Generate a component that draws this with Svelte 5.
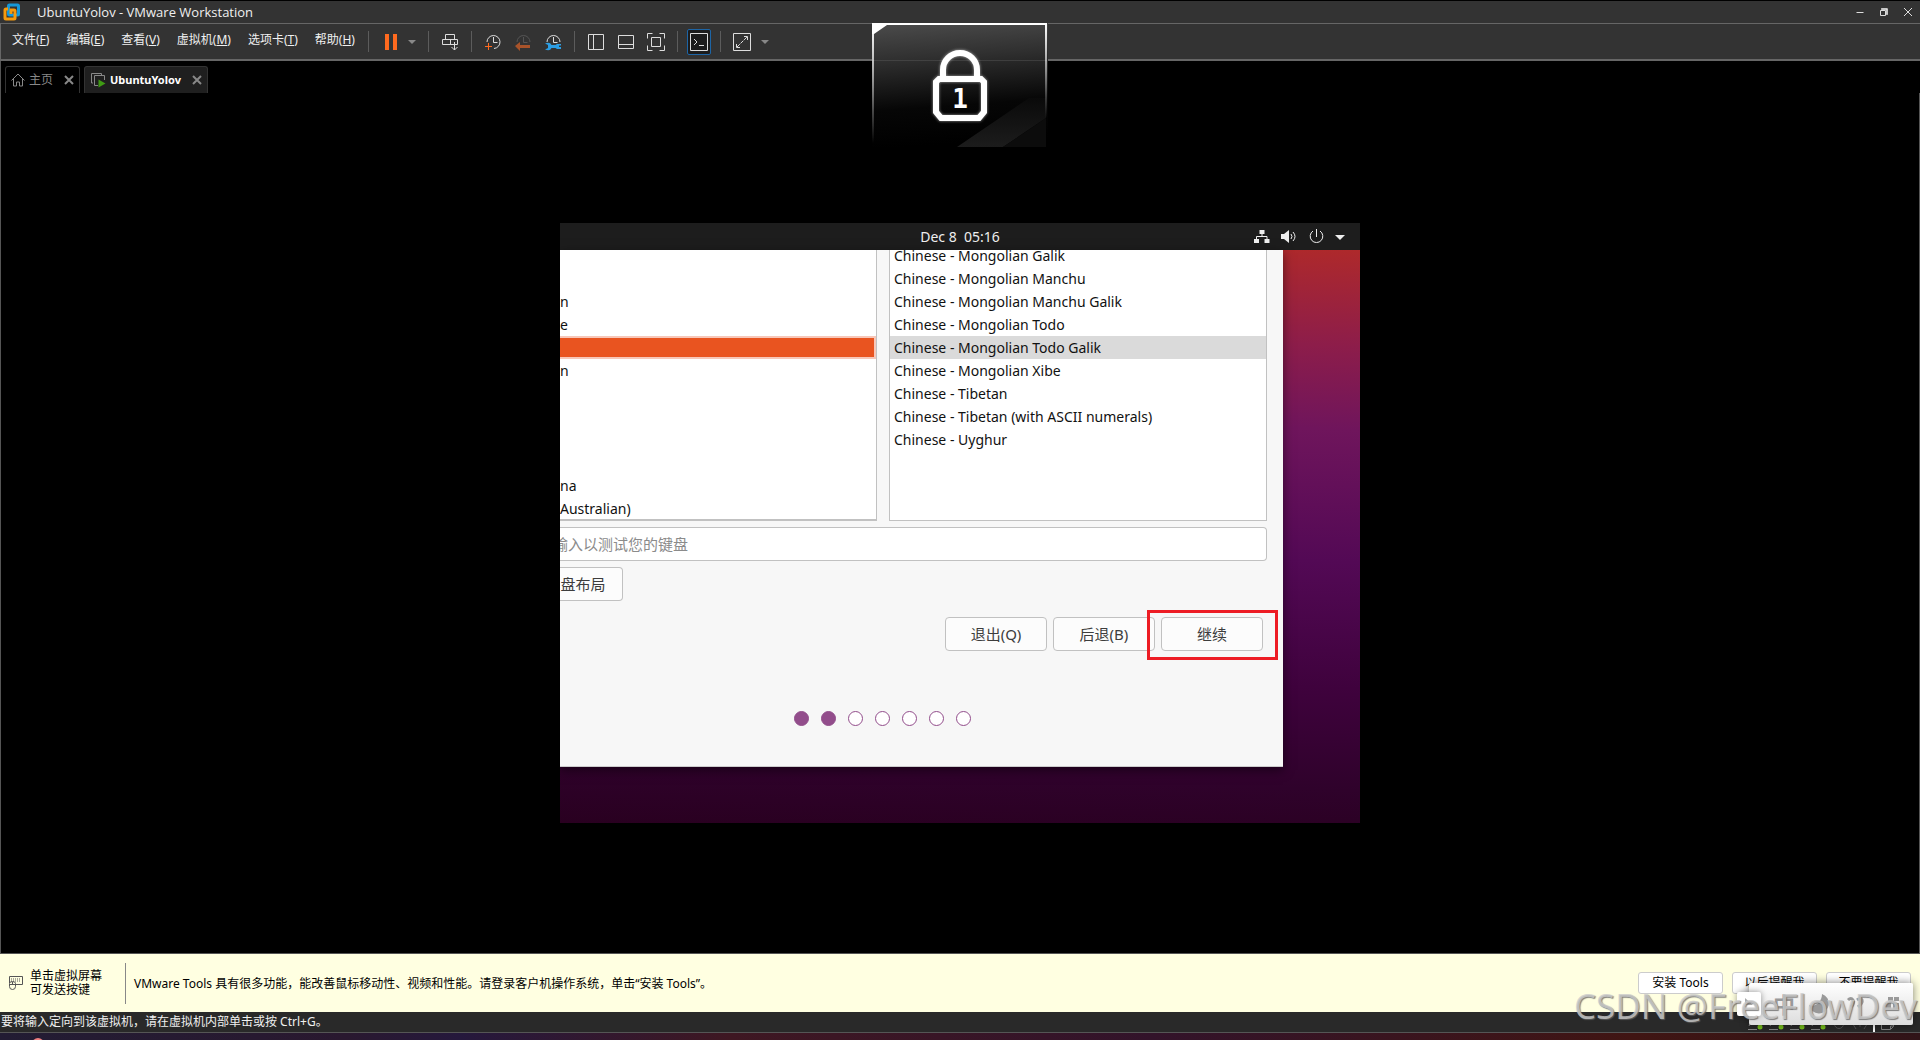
<script>
	const menus = [
		['文件', 'F'],
		['编辑', 'E'],
		['查看', 'V'],
		['虚拟机', 'M'],
		['选项卡', 'T'],
		['帮助', 'H']
	];

	const layouts = ['', '', 'n', 'e', '', 'n', '', '', '', '', 'na', 'Australian)'];

	const variants = [
		'Chinese - Mongolian Galik',
		'Chinese - Mongolian Manchu',
		'Chinese - Mongolian Manchu Galik',
		'Chinese - Mongolian Todo',
		'Chinese - Mongolian Todo Galik',
		'Chinese - Mongolian Xibe',
		'Chinese - Tibetan',
		'Chinese - Tibetan (with ASCII numerals)',
		'Chinese - Uyghur'
	];

	const steps = [true, true, false, false, false, false, false];

	let selected = $state(4);
</script>

{#snippet cross()}
	<svg width="10" height="10" viewBox="0 0 10 10"><path d="M1 1l8 8M9 1l-8 8" /></svg>
{/snippet}

<div class="workstation">
	<header class="titlebar">
		<svg class="logo" width="18" height="18" viewBox="0 0 18 18">
			<rect x="5.5" y="2" width="10" height="10" rx="1" stroke="#1598d8" />
			<path d="M5 6H3q-1 0-1 1v8q0 1 1 1h8q1 0 1-1V8q0-1-1-1H8v4" stroke="#f59a0c" />
		</svg>
		<span class="title">UbuntuYolov - VMware Workstation</span>
		<div class="window-buttons">
			<button type="button" aria-label="最小化">
				<svg width="10" height="10" viewBox="0 0 10 10"><path d="M1.5 5.5h7" /></svg>
			</button>
			<button type="button" aria-label="还原">
				<svg width="10" height="10" viewBox="0 0 10 10"><path d="M1.5 3.5h5v5h-5zM3 2h5v5" /><path d="M2 2h6v6" stroke-width="1.5" /></svg>
			</button>
			<button type="button" aria-label="关闭">{@render cross()}</button>
		</div>
	</header>

	<div class="toolbar">
		<nav class="menus">
			{#each menus as [label, key]}
				<button type="button">{label}(<u>{key}</u>)</button>
			{/each}
		</nav>
		<div class="tools">
			<div class="group power">
				<button type="button" aria-label="挂起">
					<svg width="14" height="18" viewBox="0 0 14 18"><path d="M1 1h4v16H1zM9 1h4v16H9z" fill="#ff6a1f" stroke="none" /></svg>
				</button>
				<button type="button" aria-label="电源选项">
					<svg width="8" height="6" viewBox="0 0 8 6"><path d="M0 1h8L4 5z" fill="#888" stroke="none" /></svg>
				</button>
			</div>
			<div class="group">
				<button type="button" aria-label="发送 Ctrl+Alt+Del">
					<svg width="18" height="18" viewBox="0 0 18 18"><path d="M4.500 6.500v-5h9v5M1.500 6.500h15v5h-15zM9.500 6.500v5M13.500 9v8M10.500 14l3 3 3-3" /></svg>
				</button>
			</div>
			<div class="group">
				<button type="button" aria-label="拍摄快照">
					<svg width="18" height="18" viewBox="0 0 18 18">
						<path d="M3 9A6.500 6.500 0 1 1 10 15.500M9.500 4v5.500h4" />
						<path d="M4.500 10v7M1 13.500h7" stroke="#ff6a1f" />
					</svg>
				</button>
				<button type="button" aria-label="恢复快照">
					<svg width="18" height="18" viewBox="0 0 18 18">
						<path d="M3 9A6.500 6.500 0 1 1 16 9M9.500 4v5.500h4" stroke="#555" />
						<path d="M1 13l5-4v3h10v3H6v3z" fill="#a8532a" stroke="none" />
					</svg>
				</button>
				<button type="button" aria-label="管理快照">
					<svg width="18" height="18" viewBox="0 0 18 18">
						<path d="M3 9A6.500 6.500 0 1 1 16 9M9.500 4v5.500h4" />
						<path d="M1 10.500Q6 8.500 7.500 12h4l1.500-1h4v1.500h-2v1.500h2V16h-4l-1.500-1h-4Q6 18.500 1 16.500l3-1.500v-3z" fill="#2c9ee3" stroke="none" />
					</svg>
				</button>
			</div>
			<div class="group">
				<button type="button" aria-label="显示库">
					<svg width="18" height="18" viewBox="0 0 18 18"><path d="M1.500 1.500h15v15h-15zM6.500 1.500v15" /></svg>
				</button>
				<button type="button" aria-label="缩略图栏">
					<svg width="18" height="18" viewBox="0 0 18 18"><path d="M1.500 2.500h15v13h-15zM1.500 11.500h15" /></svg>
				</button>
				<button type="button" aria-label="全屏">
					<svg width="18" height="18" viewBox="0 0 18 18"><path d="M.5 5.500v-5h5M12.500.5h5v5M17.500 12.500v5h-5M5.500 17.500h-5v-5M4.500 4.500h9v9h-9z" /></svg>
				</button>
			</div>
			<div class="group">
				<button type="button" class="console" aria-label="控制台视图">
					<svg width="18" height="18" viewBox="0 0 18 18"><path d="M.5.5h17v17H.5zM4 6l3 3-3 3M9 12.500h5" /></svg>
				</button>
			</div>
			<div class="group stretch">
				<button type="button" aria-label="自由拉伸">
					<svg width="18" height="18" viewBox="0 0 18 18"><path d="M.5.5h17v17H.5zM11 3.500h3.500V7M3.500 11v3.500H7" /><path d="M4 14L14 4" stroke-dasharray="4 1" /></svg>
				</button>
				<button type="button" aria-label="拉伸选项">
					<svg width="8" height="6" viewBox="0 0 8 6"><path d="M0 1h8L4 5z" fill="#888" stroke="none" /></svg>
				</button>
			</div>
		</div>
	</div>

	<div class="tabs">
		<div class="tab">
			<svg width="14" height="14" viewBox="0 0 14 14"><path d="M.5 7.500L7 1l6.500 6.500M2.500 6v7h3V9h3v4h3V6" /></svg>
			<span>主页</span>
			<button type="button" aria-label="关闭主页">{@render cross()}</button>
		</div>
		<div class="tab active">
			<svg width="16" height="16" viewBox="0 0 16 16">
				<path d="M3 11H1.500V1.500h10V3M8 13.500H4.500v-10h10V8" />
				<path d="M8.500 7.500l7 4-7 4z" fill="#3f9b14" stroke="none" />
			</svg>
			<span>UbuntuYolov</span>
			<button type="button" aria-label="关闭 UbuntuYolov">{@render cross()}</button>
		</div>
	</div>

	<main class="console-view">
		<div class="guest">
			<div class="topbar">
				<span></span>
				<time>Dec 8&nbsp; 05:16</time>
				<div class="indicators">
					<svg width="16" height="16" viewBox="0 0 16 16"><path d="M5.500 1h5v4h-5zM0 10h5v4H0zM10.500 10h5v4h-5z" fill="#eee" stroke="none" /><path d="M8 5v2.500M2.500 10V7.500h10.500V10" /></svg>
					<svg width="16" height="16" viewBox="0 0 16 16"><path d="M0 5h3l5-4v13l-5-4H0z" fill="#eee" stroke="none" /><path d="M10 5q2 2.500 0 5M12 3q4 4.500 0 9" /></svg>
					<svg width="16" height="16" viewBox="0 0 16 16"><path d="M8.500 0v8M5 2a6.300 6.300 0 1 0 7 0" /></svg>
					<svg width="10" height="16" viewBox="0 0 10 16"><path d="M0 6h10L5 11z" fill="#eee" stroke="none" /></svg>
				</div>
			</div>

			<div class="desktop">
				<section class="installer">
					<div class="lists">
						<ul class="list clipped">
							{#each layouts as name, i}
								<li class:chosen={i === 4}>{name}</li>
							{/each}
						</ul>
						<ul class="list">
							{#each variants as name, i}
								<li class:current={i === selected}>
									<button type="button" onclick={() => (selected = i)}>{name}</button>
								</li>
							{/each}
						</ul>
					</div>
					<input class="test-field" type="text" placeholder="输入以测试您的键盘" aria-label="测试键盘" />
					<button type="button" class="push detect">盘布局</button>
					<div class="actions">
						<button type="button" class="push">退出(Q)</button>
						<button type="button" class="push">后退(B)</button>
						<div class="highlighted">
							<button type="button" class="push">继续</button>
						</div>
					</div>
					<div class="steps">
						{#each steps as done}
							<span class:done></span>
						{/each}
					</div>
				</section>
			</div>
		</div>
	</main>

	<aside class="hint-bar">
		<svg width="14" height="16" viewBox="0 0 14 16">
			<path d="M.5 1.500h13v8H7M.5 1.500V8" />
			<path d="M2 4h10M2 6h10" stroke-dasharray="1 1" />
			<path d="M.5 8.500q0-2 3-2t3 2v3q0 3-3 3t-3-3zM.5 9.500h6M3.500 7v3" />
		</svg>
		<p class="grab">单击虚拟屏幕<br />可发送按键</p>
		<p class="message">VMware Tools 具有很多功能，能改善鼠标移动性、视频和性能。请登录客户机操作系统，单击“安装 Tools”。</p>
		<div class="hint-actions">
			<button type="button">安装 Tools</button>
			<button type="button">以后提醒我</button>
			<button type="button">不要提醒我</button>
		</div>
	</aside>

	<footer class="statusbar">
		<span>要将输入定向到该虚拟机，请在虚拟机内部单击或按 Ctrl+G。</span>
		<div class="devices">
			{#each [0, 1, 2, 3] as device}
				<svg width="16" height="14" viewBox="0 0 16 14"><path d="M1 11.500h9M2 8l2-4h6" stroke="#888" /><circle cx="13" cy="9" r="2.500" fill="#7ac51c" stroke="none" /></svg>
			{/each}
			<svg width="16" height="14" viewBox="0 0 16 14"><circle cx="8" cy="6" r="4.500" stroke="#555" /></svg>
			<svg width="16" height="14" viewBox="0 0 16 14"><path d="M2 3q-2 4 2 8M14 3q2 4-2 8M8 5v4" stroke="#555" /></svg>
			<i></i>
			<svg width="16" height="14" viewBox="0 0 16 14"><path d="M1.500 2v9.500h9l3-3V2M10.500 11v-3h3" stroke="#888" /></svg>
		</div>
	</footer>
	<div class="taskbar"><i></i></div>
</div>

<div class="lock-osd">
	<svg width="176" height="125" viewBox="0 0 176 125">
		<defs>
			<linearGradient id="osd" x1="0" y1="0" x2="0.100" y2="1">
				<stop offset="0" stop-color="#4c4c4c" />
				<stop offset="0.300" stop-color="#303030" />
				<stop offset="0.700" stop-color="#060606" />
				<stop offset="1" stop-color="#000" />
			</linearGradient>
			<linearGradient id="edge" x1="0" y1="0" x2="0" y2="1">
				<stop offset="0" stop-color="#fff" />
				<stop offset="1" stop-color="#fff" stop-opacity="0" />
			</linearGradient>
			<linearGradient id="shine" x1="0" y1="0" x2="0" y2="1">
				<stop offset="0" stop-color="#0a0a0a" />
				<stop offset="1" stop-color="#1c1c1c" />
			</linearGradient>
			<filter id="glow" x="-20%" y="-20%" width="140%" height="140%"><feGaussianBlur stdDeviation="1.500" /></filter>
		</defs>
		<rect width="176" height="125" fill="url(#osd)" stroke="none" />
		<path d="M85 124l72-49h17v20l-43 29z" fill="url(#shine)" stroke="none" />
		<path d="M131 124l43-29v29z" fill="#0c0c0c" stroke="none" />
		<rect y="37" width="175" height="1" fill="#666" opacity="0.350" stroke="none" />
		<rect width="2" height="120" fill="url(#edge)" stroke="none" />
		<rect x="173" width="2" height="95" fill="url(#edge)" stroke="none" />
		<path d="M0 0h175v2H15L2 11H0z" fill="#fff" stroke="none" />
		<g class="padlock" filter="url(#glow)" opacity="0.600"><path d="M71 56V47a17 17 0 0 1 34 0v9M67 56h42l3 3v30l-5 6H69l-5-6V59z" /></g>
		<g class="padlock"><path d="M71 56V47a17 17 0 0 1 34 0v9M67 56h42l3 3v30l-5 6H69l-5-6V59z" /></g>
		<text x="88" y="85" text-anchor="middle">1</text>
	</svg>
</div>

<div class="ime">
	<span class="ime-handle"><svg width="24" height="24" viewBox="0 0 24 24"><path d="M8 6l8 7H8z" fill="#aaa" stroke="none" /></svg></span>
	<div class="ime-bar">
		<span>中</span>
		<svg width="24" height="24" viewBox="0 0 24 24"><path d="M15 2a10 10 0 1 1-13 11c6 3 13-3 13-11z" fill="#999" stroke="none" /></svg>
		<svg width="24" height="24" viewBox="0 0 24 24"><path d="M5 8q3-3 5 0t-2 7M14 8q4-3 5 0t-4 7" stroke="#999" stroke-width="3" /></svg>
		<svg width="24" height="24" viewBox="0 0 24 24"><path d="M9 5h5v4H9zM15 5h5v4h-5zM6 11h6v6H6zM14 11h6v6h-6z" fill="#999" stroke="none" /></svg>
	</div>
</div>
<div class="watermark">CSDN @FreeFlowDev</div>

<style>
	:global(body) {
		background: #000;
		color: #f0f0f0;
		font-family: 'Noto Sans', 'Noto Sans CJK SC', sans-serif;
		font-size: 12px;
		line-height: 16px;
	}

	button {
		display: flex;
		align-items: center;
		justify-content: center;
		padding: 0;
		border: 0;
		background: none;
		color: inherit;
		font: inherit;
		white-space: nowrap;
	}

	svg {
		display: block;
		flex: none;
		fill: none;
		stroke: #ddd;
	}

	p,
	ul {
		margin: 0;
		padding: 0;
	}

	.workstation {
		display: flex;
		flex-direction: column;
		min-height: 100vh;
	}

	.titlebar {
		display: flex;
		align-items: center;
		height: 23px;
		padding-left: 3px;
		border-top: 1px solid #000;
		box-sizing: border-box;
		background: #333;
	}

	.logo {
		stroke-width: 3;
	}

	.title {
		flex: 1;
		margin-left: 16px;
		font-family: 'Open Sans', sans-serif;
		font-size: 13px;
	}

	.window-buttons {
		display: flex;
		gap: 14px;
		padding-right: 7px;
	}

	.toolbar {
		display: flex;
		height: 38px;
		box-sizing: border-box;
		border-top: 1px solid #666;
		border-bottom: 2px solid #666;
		border-left: 1px solid #666;
		background: #333;
	}

	.menus {
		display: flex;
		align-items: center;
		gap: 17px;
		padding: 0 13px 4px 11px;
	}

	.tools,
	.group {
		display: flex;
		align-items: center;
	}

	.group {
		gap: 12px;
		height: 21px;
		padding: 0 12px;
		border-left: 1px solid #5c5c5c;
	}

	.power,
	.stretch {
		gap: 10px;
	}

	.power {
		padding-left: 15px;
	}

	.console {
		width: 24px;
		height: 26px;
		box-sizing: border-box;
		margin: 0 -3px;
		border: 1px solid #1d65a6;
		border-radius: 2px;
		background: #1c1c1c;
	}

	.tabs {
		display: flex;
		gap: 4px;
		padding: 5px 4px 0;
		border-left: 1px solid #555;
	}

	.tab {
		display: flex;
		align-items: center;
		gap: 4px;
		height: 27px;
		padding: 0 5px;
		box-sizing: border-box;
		border: 1px solid #333;
		border-bottom: 0;
		border-radius: 3px 3px 0 0;
		color: #888;
	}

	.tab svg {
		stroke: #888;
	}

	.tab button {
		margin-left: 7px;
	}

	.tab button svg {
		stroke-width: 2;
	}

	.tab.active {
		background: #1f1f1f;
		color: #fff;
		font-size: 11px;
		font-weight: 700;
	}

	.console-view {
		display: flex;
		flex: 1;
		align-items: center;
		justify-content: center;
		border: 1px solid #555;
		border-top: 0;
	}

	.guest {
		width: 800px;
		overflow: hidden;
	}

	.topbar {
		display: grid;
		grid-template-columns: 1fr auto 1fr;
		align-items: center;
		height: 27px;
		background: #1d1d1d;
		color: #eee;
		font-size: 14px;
	}

	.indicators {
		display: flex;
		gap: 11px;
		justify-content: flex-end;
		padding-right: 15px;
	}

	.indicators svg {
		stroke: #eee;
	}

	.desktop {
		height: 573px;
		background: linear-gradient(182deg, #ae292b 0%, #8d1d4a 16%, #6f155c 30%, #530955 52%, #3f023d 73%, #2f022b 90%, #290020 100%);
	}

	.installer {
		width: 723px;
		height: 517px;
		box-sizing: border-box;
		border-bottom: 1px solid #ccc;
		background: #f7f7f7;
		box-shadow: 0 3px 10px rgba(0, 0, 0, 0.5);
		color: #111;
		font-size: 14px;
	}

	.lists {
		display: flex;
		gap: 12px;
		height: 271px;
	}

	.list {
		width: 378px;
		box-sizing: border-box;
		overflow: hidden;
		border: 1px solid #c1c1c1;
		border-top: 0;
		background: #fff;
		list-style: none;
	}

	.list.clipped {
		width: 317px;
		border-left: 0;
		border-bottom-width: 2px;
	}

	.list li {
		height: 23px;
		box-sizing: border-box;
		line-height: 23px;
	}

	.list li:first-child {
		margin-top: -6px;
	}

	.list button {
		width: 100%;
		height: 23px;
		justify-content: flex-start;
		padding-left: 4px;
	}

	.list .current {
		background: #dadada;
	}

	.list .chosen {
		border: 2px solid #f7c7b9;
		border-left: 0;
		background: #e95420;
	}

	.test-field {
		display: block;
		width: 707px;
		height: 34px;
		box-sizing: border-box;
		margin-top: 6px;
		padding: 0;
		border: 1px solid #c1c1c1;
		border-left: 0;
		border-radius: 0 4px 4px 0;
		background: #fff;
		font: inherit;
		font-size: 15px;
		text-indent: -7px;
	}

	.test-field::placeholder {
		color: #8b8b8b;
	}

	.push {
		width: 102px;
		height: 34px;
		box-sizing: border-box;
		border: 1px solid #c1c1c1;
		border-radius: 4px;
		background: #fcfcfc;
		color: #3d3d3d;
		font-size: 15px;
	}

	.detect {
		width: 63px;
		margin-top: 6px;
		padding-right: 16px;
		border-left: 0;
		border-radius: 0 4px 4px 0;
	}

	.actions {
		display: flex;
		gap: 6px;
		justify-content: flex-end;
		margin-top: 16px;
		padding-right: 20px;
	}

	.highlighted {
		position: relative;
	}

	.highlighted::after {
		position: absolute;
		inset: -7px -15px -9px -14px;
		border: 3px solid #ed1c24;
		content: '';
		pointer-events: none;
	}

	.steps {
		display: flex;
		gap: 12px;
		justify-content: center;
		margin-top: 60px;
		padding-right: 78px;
	}

	.steps span {
		width: 15px;
		height: 15px;
		box-sizing: border-box;
		border: 1px solid #924d8b;
		border-radius: 50%;
		background: #fff;
	}

	.steps .done {
		background: #924d8b;
	}

	.hint-bar {
		display: flex;
		align-items: center;
		height: 58px;
		padding: 0 9px;
		background: #ffffe1;
		color: #000;
	}

	.hint-bar > svg {
		stroke: #555;
	}

	.grab {
		margin-left: 7px;
		line-height: 14px;
	}

	.message {
		flex: 1;
		margin-left: 23px;
		padding-left: 8px;
		border-left: 1px solid #888;
		line-height: 41px;
	}

	.hint-actions {
		display: flex;
		gap: 9px;
	}

	.hint-actions button {
		width: 85px;
		height: 22px;
		border: 1px solid #ccc;
		border-radius: 3px;
		background: #fff;
	}

	.statusbar {
		display: flex;
		align-items: center;
		justify-content: space-between;
		height: 20px;
		padding: 0 24px 0 1px;
		border-bottom: 1px solid #555;
		background: #292929;
	}

	.devices {
		display: flex;
		align-items: center;
		align-self: flex-end;
		gap: 5px;
	}

	.devices i {
		width: 2px;
		height: 14px;
		background: #fff;
	}

	.taskbar {
		height: 7px;
		overflow: hidden;
		background: linear-gradient(90deg, #221c33 0%, #29182f 18%, #25183c 24%, #3e1722 38%, #32132a 60%, #401513 85%, #301418 100%);
	}

	.taskbar i {
		display: block;
		width: 12px;
		height: 12px;
		margin: 5px 0 0 32px;
		border-radius: 50%;
		background: #f08080;
	}

	.lock-osd {
		position: absolute;
		top: 23px;
		left: 50%;
		margin-left: -88px;
	}

	.padlock {
		stroke: #fff;
		stroke-width: 6;
	}

	.lock-osd text {
		fill: #fff;
		stroke: none;
		font-family: 'DejaVu Sans Mono', monospace;
		font-size: 26px;
		font-weight: 700;
	}

	.ime {
		position: absolute;
		right: 7px;
		bottom: 15px;
		display: flex;
		align-items: center;
	}

	.ime-handle {
		z-index: 1;
		margin-right: -12px;
		border-radius: 2px;
		background: #fff;
		box-shadow: 0 0 6px rgba(0, 0, 0, 0.4);
	}

	.ime-bar {
		display: flex;
		align-items: center;
		gap: 12px;
		width: 164px;
		height: 42px;
		box-sizing: border-box;
		padding-left: 24px;
		border-radius: 2px;
		background: linear-gradient(#fff, #ddd);
		box-shadow: 0 0 8px rgba(0, 0, 0, 0.5);
		color: #999;
		font-size: 22px;
		font-weight: 700;
	}

	.watermark {
		position: absolute;
		right: 3px;
		bottom: 14px;
		z-index: 2;
		color: rgba(205, 205, 205, 0.8);
		font-size: 35px;
		line-height: 40px;
		text-shadow: 1px 1px 1px rgba(100, 100, 100, 0.8);
		white-space: nowrap;
	}
</style>
